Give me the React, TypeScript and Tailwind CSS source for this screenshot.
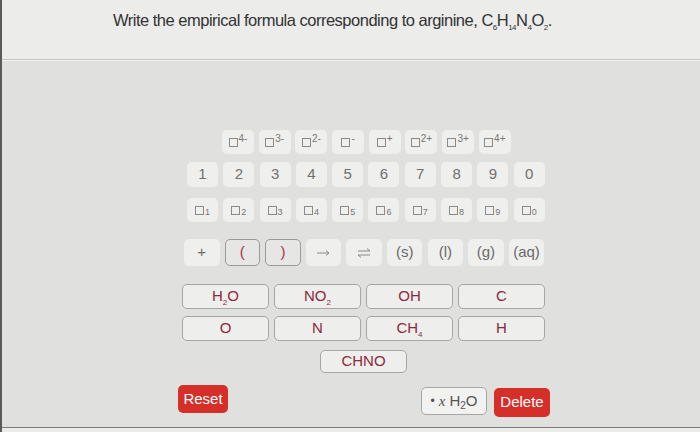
import React from "react";

const charges = ["4-", "3-", "2-", "-", "+", "2+", "3+", "4+"];
const digits = ["1", "2", "3", "4", "5", "6", "7", "8", "9", "0"];
const subs = ["1", "2", "3", "4", "5", "6", "7", "8", "9", "0"];

function Box() {
  return <span className="inline-block h-[9px] w-[9px] border border-[#8a8a8a]" />;
}

function Sub({ children }: { children: React.ReactNode }) {
  return <span className="relative top-[4px] text-[8px] leading-none">{children}</span>;
}

function Arrow() {
  return (
    <svg width="13" height="8" viewBox="0 0 13 8" fill="none" stroke="#8a8a8a" strokeWidth="1">
      <path d="M0 4H12M9 1.5L12 4L9 6.5" />
    </svg>
  );
}

function Equilibrium() {
  return (
    <svg width="14" height="10" viewBox="0 0 14 10" fill="none" stroke="#8a8a8a" strokeWidth="1">
      <path d="M1 3H13L10 0.5M13 7H1L4 9.5" />
    </svg>
  );
}

export default function App() {
  return (
    <div
      className="flex h-[432px] w-[700px] flex-col overflow-hidden border-l-2 border-[#5a5a5a] bg-[#e0e0de]"
      style={{ fontFamily: '"Liberation Sans", Arial, sans-serif' }}
    >
      <div className="h-[60px] shrink-0 border-b border-[#c4c4c2] bg-[#ececea] pl-[111px] pt-[8px]">
        <p className="text-[16.5px] tracking-[-0.5px] text-[#333]">
          Write the empirical formula corresponding to arginine, C<Sub>6</Sub>H<Sub>14</Sub>N<Sub>4</Sub>O
          <Sub>2</Sub>.
        </p>
      </div>
      <div className="h-px bg-[#f2f2f0]" />

      <div className="flex flex-1 flex-col pl-[178px]">
        {/* charges */}
        <div className="ml-[42px] mt-[69px] flex gap-[4.7px]">
          {charges.map((c) => (
            <div
              key={c}
              className="flex h-[24px] w-[32px] items-center justify-center gap-[1px] rounded-[5px] bg-[#efefed]"
            >
              <Box />
              <span className="-mt-[7px] text-[10px] text-[#777]">{c}</span>
            </div>
          ))}
        </div>

        {/* digits */}
        <div className="ml-[7px] mt-[8px] flex gap-[5.3px]">
          {digits.map((d) => (
            <div
              key={d}
              className="flex h-[25px] w-[31px] items-center justify-center rounded-[5px] bg-[#efefed] text-[15px] text-[#707070]"
            >
              {d}
            </div>
          ))}
        </div>

        {/* subscripts */}
        <div className="ml-[7px] mt-[11px] flex gap-[5.3px]">
          {subs.map((d) => (
            <div
              key={d}
              className="flex h-[24px] w-[31px] items-center justify-center gap-[1px] rounded-[5px] bg-[#efefed]"
            >
              <Box />
              <span className="mt-[6px] text-[9px] text-[#777]">{d}</span>
            </div>
          ))}
        </div>

        {/* symbols */}
        <div className="ml-[4px] mt-[17px] flex gap-[5.1px]">
          {["+", "(", ")", "→", "⇌", "(s)", "(l)", "(g)", "(aq)"].map((s) => {
            const paren = s === "(" || s === ")";
            return (
              <div
                key={s}
                className={
                  paren
                    ? "flex h-[27px] w-[35.5px] items-center justify-center rounded-[5px] border border-[#9a9a98] bg-[#e6e6e4] text-[15px] text-[#a8324e]"
                    : "flex h-[27px] w-[35.5px] items-center justify-center rounded-[5px] bg-[#efefed] text-[15px] text-[#6a6a6a]"
                }
              >
                {s === "→" ? <Arrow /> : s === "⇌" ? <Equilibrium /> : s}
              </div>
            );
          })}
        </div>

        {/* formula grid */}
        <div className="ml-[2px] mt-[18px] grid w-[363px] grid-cols-4 gap-x-[5px] gap-y-[7px]">
          {[
            <>
              H<Sub>2</Sub>O
            </>,
            <>
              NO<Sub>2</Sub>
            </>,
            <>OH</>,
            <>C</>,
            <>O</>,
            <>N</>,
            <>
              CH<Sub>4</Sub>
            </>,
            <>H</>,
          ].map((f, i) => (
            <div
              key={i}
              className="flex h-[25px] items-center justify-center rounded-[5px] border border-[#a6a6a4] bg-[#eeeeec] text-[15px] text-[#8a2a3c]"
            >
              <span>{f}</span>
            </div>
          ))}
        </div>
        <div className="ml-[140px] mt-[9px] flex h-[23px] w-[87px] items-center justify-center rounded-[5px] border border-[#a6a6a4] bg-[#eeeeec] text-[15px] text-[#8a2a3c]">
          CHNO
        </div>

        {/* actions */}
        <div className="mt-[12px] flex items-start">
          <button className="ml-[-2px] flex h-[28px] w-[50px] items-center justify-center rounded-[5px] bg-[#d52f2a] text-[15px] text-white">
            Reset
          </button>
          <button className="ml-[193px] mt-[2px] flex h-[28px] w-[66px] items-center justify-center gap-[4px] rounded-[5px] border border-[#a6a6a4] bg-[#f2f2f0] text-[15px] text-[#555]">
            <span className="text-[12px]">•</span>
            <span className="italic" style={{ fontFamily: '"Liberation Serif", serif' }}>
              x
            </span>
            <span>
              H<span className="relative top-[3px] text-[10px]">2</span>O
            </span>
          </button>
          <button className="ml-[7px] mt-[3px] flex h-[29px] w-[56px] items-center justify-center rounded-[5px] bg-[#d52f2a] text-[15px] text-white">
            Delete
          </button>
        </div>
      </div>
      <div className="h-[5px] shrink-0 border-t border-[#7a7a7a] bg-[#ececea]" />
    </div>
  );
}
